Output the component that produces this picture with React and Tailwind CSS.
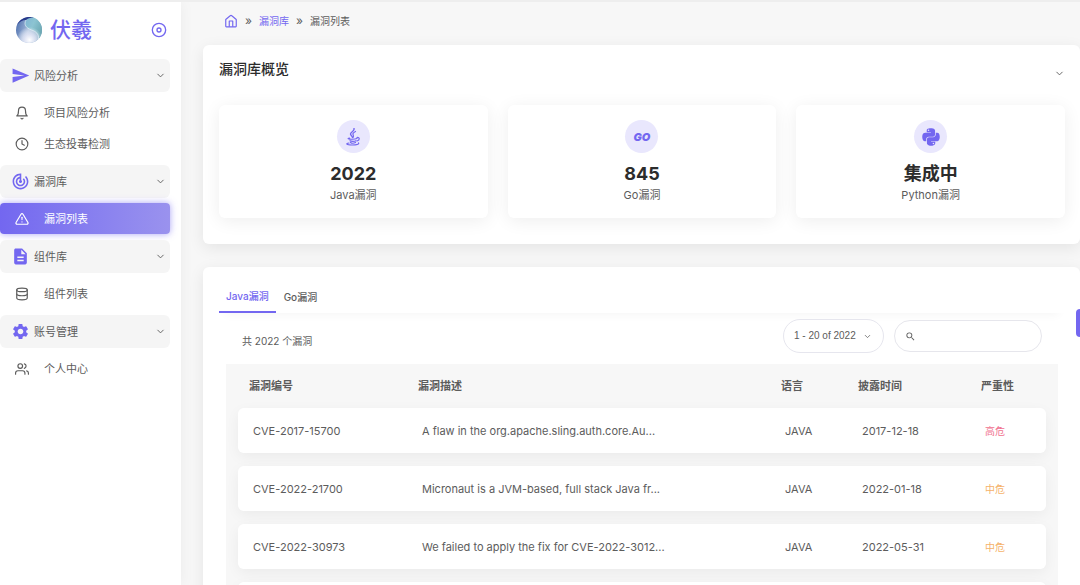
import React from 'react';
import { FiBell, FiClock, FiAlertTriangle, FiDatabase, FiUsers, FiDisc, FiChevronDown } from 'react-icons/fi';
import { MdSend, MdTrackChanges, MdDescription, MdSettings, MdSearch } from 'react-icons/md';
import { FaPython } from 'react-icons/fa6';

const sections = [
  {
    title: '风险分析',
    icon: MdSend,
    items: [
      { label: '项目风险分析', icon: FiBell },
      { label: '生态投毒检测', icon: FiClock },
    ],
  },
  { title: '漏洞库', icon: MdTrackChanges, items: [{ label: '漏洞列表', icon: FiAlertTriangle, active: true }] },
  { title: '组件库', icon: MdDescription, items: [{ label: '组件列表', icon: FiDatabase }] },
  { title: '账号管理', icon: MdSettings, items: [{ label: '个人中心', icon: FiUsers }] },
];

function JavaIcon() {
  return (
    <svg viewBox="0 0 28 36" className="h-[18px] w-[14px]" fill="none" stroke="currentColor" strokeWidth="2.4" strokeLinecap="round" aria-hidden="true">
      <path d="M16 1c2 5-7 7-7 11 0 3 4 4 4 7" strokeWidth="2.8" />
      <path d="M19 7c-4 2-6 4-5 6s2 3 0 6" />
      <path d="M7 20c-5 1-3 2.500 5 2.500 4 0 8-.5 10-1.500" />
      <path d="M22 19c6-1 6 5 0 7" />
      <path d="M8 25.500c2 1.500 9 1.500 12 0M9 29c2 1.500 7 1.500 10 0" />
      <path d="M6 30c-7 1-6 4 6 4 10 0 15-2 13-4" />
    </svg>
  );
}

function GoIcon() {
  return <span className="text-[11px] leading-4 font-black italic">GO</span>;
}

function PythonIcon() {
  return <FaPython size={20} />;
}

const stats = [
  { value: '2022', label: 'Java漏洞', icon: JavaIcon },
  { value: '845', label: 'Go漏洞', icon: GoIcon },
  { value: '集成中', label: 'Python漏洞', icon: PythonIcon },
];

const rows = [
  { id: 'CVE-2017-15700', desc: 'A flaw in the org.apache.sling.auth.core.Au...', lang: 'JAVA', date: '2017-12-18', level: '高危' },
  { id: 'CVE-2022-21700', desc: 'Micronaut is a JVM-based, full stack Java fr...', lang: 'JAVA', date: '2022-01-18', level: '中危' },
  { id: 'CVE-2022-30973', desc: 'We failed to apply the fix for CVE-2022-3012...', lang: 'JAVA', date: '2022-05-31', level: '中危' },
];

function Logo() {
  return (
    <svg viewBox="0 0 52 52" className="size-[26px]" aria-hidden="true">
      <defs>
        <linearGradient id="orbBase" x1="0" y1="0.3" x2="1" y2="0.6">
          <stop offset="0" stopColor="#5273b0" />
          <stop offset="0.5" stopColor="#a9bfdc" />
          <stop offset="1" stopColor="#6f9bb8" />
        </linearGradient>
        <linearGradient id="orbTop" x1="0" y1="0" x2="1" y2="0.6">
          <stop offset="0" stopColor="#7fb4d4" />
          <stop offset="0.5" stopColor="#8cc4d2" />
          <stop offset="1" stopColor="#6da9b4" />
        </linearGradient>
        <radialGradient id="orbGlow" cx="0.52" cy="0.88" r="0.5">
          <stop offset="0" stopColor="#ffffff" />
          <stop offset="0.45" stopColor="#e3e6f6" stopOpacity="0.85" />
          <stop offset="1" stopColor="#ffffff" stopOpacity="0" />
        </radialGradient>
      </defs>
      <circle cx="26" cy="26" r="26" fill="url(#orbBase)" />
      <path d="M20 6C23 2 28 0 31 0c12 2 21 13 21 25 0 8-3 15-7 19 1-10-5-15-14-18C20 22 15 15 20 6z" fill="url(#orbTop)" />
      <path d="M20 6c-5 9 0 16 11 20 9 3 15 8 14 18" fill="none" stroke="#dcecf4" strokeWidth="1.5" />
      <path d="M2 16C7 5 18 0 27 0c4 0 6 .5 8 1-7 0-12 2-15 5C13 6 7 9 2 16z" fill="#28388a" />
      <circle cx="26" cy="26" r="26" fill="url(#orbGlow)" />
    </svg>
  );
}

function HomeIcon() {
  return (
    <svg viewBox="0 0 24 24" className="size-[14px]" fill="none" stroke="currentColor" strokeWidth="2" strokeLinejoin="round" aria-hidden="true">
      <path d="M3 9.500 10.600 3a2 2 0 0 1 2.800 0L21 9.500V21a1 1 0 0 1-1 1H4a1 1 0 0 1-1-1z" />
      <path d="M9 22V12h6v10" />
    </svg>
  );
}

function Sidebar() {
  return (
    <aside className="flex w-[181px] shrink-0 flex-col bg-white shadow-[0_0_14px_rgba(0,0,0,0.05)]">
      <div className="flex h-[57px] items-center pr-3.5 pb-0.5 pl-4">
        <Logo />
        <span className="ml-2 text-[21px] font-medium text-[#7367f0]">伏羲</span>
        <button type="button" aria-label="固定菜单" className="ml-auto text-[#7367f0]">
          <FiDisc size={16} />
        </button>
      </div>
      <nav className="flex flex-col pr-[11px]">
        {sections.map(({ title, icon: Icon, items }) => (
          <div key={title}>
            <button type="button" className="flex h-[33px] w-full items-center rounded-md bg-[#f5f5f5] pr-1 pl-[11px] text-left">
              <Icon size={19} className="text-[#7367f0]" />
              <span className="ml-1">{title}</span>
              <FiChevronDown size={11} className="ml-auto" />
            </button>
            <ul className="pt-[5px] pb-1.5">
              {items.map(({ label, icon: ItemIcon, active }) => (
                <li key={label}>
                  <a
                    href="#"
                    aria-current={active ? 'page' : undefined}
                    className={
                      active
                        ? 'flex h-[31px] items-center gap-[15px] rounded-sm bg-linear-to-r from-[#7367f0] to-[#9a92ee] pl-[15px] text-white shadow-[0_0_7px_rgba(115,103,240,0.6)]'
                        : 'flex h-[31px] items-center gap-[15px] pl-[15px]'
                    }
                  >
                    <ItemIcon size={14} />
                    {label}
                  </a>
                </li>
              ))}
            </ul>
          </div>
        ))}
      </nav>
    </aside>
  );
}

function Overview() {
  return (
    <section className="rounded-md bg-white pr-[15px] pb-[26px] pl-4 shadow-[0_4px_16px_rgba(0,0,0,0.08)]">
      <header className="flex h-[60px] items-center justify-between pb-3">
        <h1 className="text-sm font-medium text-[#2c2c2c]">漏洞库概览</h1>
        <button type="button" aria-label="收起" className="pt-2">
          <FiChevronDown size={11} />
        </button>
      </header>
      <div className="grid grid-cols-3 gap-5">
        {stats.map(({ value, label, icon: Icon }) => (
          <div key={label} className="flex flex-col items-center rounded-md bg-white pt-[15px] pb-3.5 shadow-[0_3px_18px_rgba(0,0,0,0.07)]">
            <div className="flex size-[33px] items-center justify-center rounded-full bg-[#e9e7fd] text-[#7367f0]">
              <Icon />
            </div>
            <p className="mt-[9px] text-lg leading-6 font-bold text-[#2c2c2c]">{value}</p>
            <p className="text-[11px] leading-[18px]">{label}</p>
          </div>
        ))}
      </div>
    </section>
  );
}

function Vulnerabilities() {
  return (
    <section className="rounded-md bg-white pt-3.5 pr-[15px] pl-4 shadow-[0_4px_16px_rgba(0,0,0,0.08)]">
      <div role="tablist" className="flex h-8 text-[10px] font-medium shadow-[0_8px_10px_-6px_rgba(0,0,0,0.04)]">
        <button type="button" role="tab" aria-selected="true" className="border-b-2 border-[#7367f0] px-[7px] text-[#7367f0]">
          Java漏洞
        </button>
        <button type="button" role="tab" aria-selected="false" className="px-2">
          Go漏洞
        </button>
      </div>
      <div className="flex h-[51px] items-start px-[23px] pt-1.5">
        <p className="mt-3.5 mr-auto text-[10px]">共 2022 个漏洞</p>
        <div className="flex items-center gap-2.5">
          <div className="grid items-center">
            <select
              aria-label="每页范围"
              className="col-start-1 row-start-1 h-[34px] w-[101px] appearance-none rounded-full border border-[#e6e6ee] bg-white pl-2.5 font-['Liberation_Sans',sans-serif] text-[10px]"
            >
              <option>1 - 20 of 2022</option>
              <option>21 - 40 of 2022</option>
            </select>
            <FiChevronDown size={9} className="pointer-events-none col-start-1 row-start-1 mr-3 justify-self-end" />
          </div>
          <label className="flex h-8 w-[148px] items-center gap-2 rounded-full border border-[#e6e6ec] px-2.5">
            <MdSearch size={11} className="shrink-0" />
            <input type="search" aria-label="搜索漏洞" className="w-full min-w-0 bg-transparent outline-none" />
          </label>
        </div>
      </div>
      <div className="mx-[7px] bg-[#f7f7f7] px-3">
        <table className="w-full table-fixed border-separate border-spacing-x-0 border-spacing-y-[13px] text-left">
          <colgroup>
            <col className="w-[169px]" />
            <col />
            <col className="w-[77px]" />
            <col className="w-[123px]" />
            <col className="w-[76px]" />
          </colgroup>
          <thead>
            <tr className="h-[18px] leading-[18px]">
              {['漏洞编号', '漏洞描述', '语言', '披露时间', '严重性'].map((name) => (
                <th key={name} scope="col" className="pl-[11px] font-bold">
                  {name}
                </th>
              ))}
            </tr>
          </thead>
          <tbody>
            {rows.map((row) => (
              <tr key={row.id} className="h-[45px] rounded-md shadow-[0_4px_14px_rgba(0,0,0,0.05)]">
                <td className="rounded-l-md bg-white pl-[15px]">{row.id}</td>
                <td className="truncate bg-white pl-[15px]">{row.desc}</td>
                <td className="bg-white pl-[15px]">{row.lang}</td>
                <td className="bg-white pl-[15px]">{row.date}</td>
                <td
                  className={
                    row.level === '高危'
                      ? 'rounded-r-md bg-white pl-[15px] text-[10px] text-[#f0718f]'
                      : 'rounded-r-md bg-white pl-[15px] text-[10px] text-[#f5b26b]'
                  }
                >
                  {row.level}
                </td>
              </tr>
            ))}
            <tr className="h-[45px] rounded-md shadow-[0_4px_14px_rgba(0,0,0,0.05)]">
              <td colSpan={5} className="rounded-md bg-white" />
            </tr>
          </tbody>
        </table>
      </div>
    </section>
  );
}

export default function App() {
  return (
    <div className="relative flex h-screen overflow-hidden border-t-2 border-[#eeeeee] bg-[#f7f7f7] font-['Inter','Noto_Sans_CJK_SC',sans-serif] text-[11px] leading-4 text-[#5c5c5c]">
      <Sidebar />
      <main className="min-w-0 flex-1 overflow-y-auto pl-[22px] [scrollbar-width:none]">
        <nav aria-label="面包屑" className="flex h-[43px] items-center gap-[7px] pb-1.5 pl-[21px] text-[10px]">
          <a href="#" aria-label="首页" className="text-[#7367f0]">
            <HomeIcon />
          </a>
          <span className="text-xs">»</span>
          <a href="#" className="text-[#7367f0]">漏洞库</a>
          <span className="text-xs">»</span>
          <span>漏洞列表</span>
        </nav>
        <div className="flex flex-col gap-[23px]">
          <Overview />
          <Vulnerabilities />
        </div>
      </main>
      <button type="button" aria-label="主题设置" className="absolute top-[307px] right-0 h-7 w-1 rounded-l-sm bg-[#7367f0]" />
    </div>
  );
}
